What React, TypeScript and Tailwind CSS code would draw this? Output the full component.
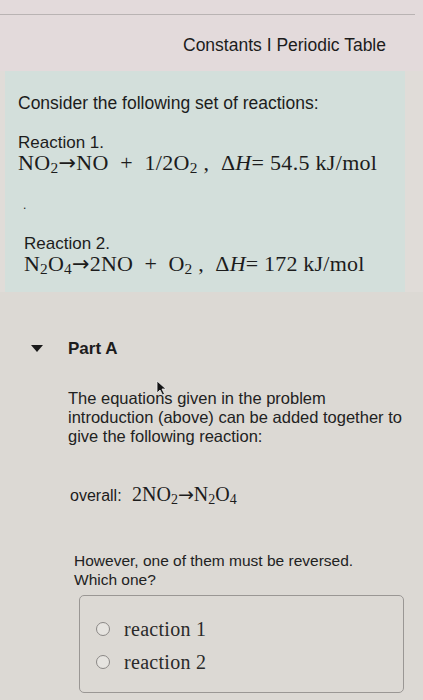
import React from 'react';

const sans = { fontFamily: '"Liberation Sans", Arial, sans-serif' };
const serif = { fontFamily: '"Liberation Serif", "Times New Roman", serif' };
const arrowFont = { fontFamily: '"DejaVu Sans", sans-serif' };

const Sub: React.FC<{ children: React.ReactNode }> = ({ children }) => (
  <sub className="text-[0.7em] relative top-[0.18em] align-baseline">{children}</sub>
);

const Arrow = () => (
  <span className="text-[0.95em]" style={arrowFont}>→</span>
);

const App: React.FC = () => {
  return (
    <div className="w-[423px] h-[700px] overflow-hidden bg-[#dcd9d4] text-[#1c1c1c]" style={sans}>
      <div className="bg-[#e3dadb] pt-[14px]">
        <div className="h-px bg-[#b9b3b3] mr-[8px]" />
        <div className="flex justify-end pr-[37px] pt-[20px] pb-[16px] text-[17.5px] leading-[20px]">
          Constants I Periodic Table
        </div>
      </div>

      <div className="bg-[#e0dcd8] pl-[5px] pr-[18px]">
        <div className="bg-[#d3dfdb] px-[13px] pt-[22px] pb-[17px]">
          <p className="text-[17.5px] leading-[20px]">Consider the following set of reactions:</p>

          <p className="mt-[21px] text-[17px] leading-[18px]">Reaction 1.</p>
          <p className="text-[22px] leading-[22px] whitespace-nowrap tracking-[0.3px]" style={serif}>
            NO<Sub>2</Sub>
            <Arrow />
            NO&nbsp; + &nbsp;1/2O<Sub>2</Sub>&nbsp;, &nbsp;Δ<i>H</i>= 54.5 kJ/mol
          </p>

          <p className="mt-[24px] ml-[5px] text-[12px] leading-[14px]">.</p>

          <p className="mt-[23px] ml-[6px] text-[17px] leading-[18px]">Reaction 2.</p>
          <p className="ml-[6px] text-[22px] leading-[22px] whitespace-nowrap tracking-[0.2px]" style={serif}>
            N<Sub>2</Sub>O<Sub>4</Sub>
            <Arrow />
            2NO&nbsp; + &nbsp;O<Sub>2</Sub>&nbsp;, &nbsp;Δ<i>H</i>= 172 kJ/mol
          </p>
        </div>
      </div>

      <div className="pt-[48px] pl-[31px] pr-[18px]">
        <div className="flex items-center h-[18px]">
          <svg width="12" height="8" viewBox="0 0 12 8" className="mr-[25px]">
            <path d="M0 0 L12 0 L6 7 Z" fill="#1a1a1a" />
          </svg>
          <span className="font-bold text-[17px] leading-[18px]">Part A</span>
        </div>

        <div className="ml-[37px] relative">
          <svg width="12" height="16" viewBox="0 0 12 16" className="absolute left-[88px] top-[22px]">
            <path d="M1 1 L1 13 L4 10 L6.5 15 L8.5 14 L6 9 L10 9 Z" fill="#151515" stroke="#f0f0f0" strokeWidth="0.8" />
          </svg>
          <p className="pt-[31px] w-[340px] text-[16.5px] leading-[19px] text-[#222]">
            The equations given in the problem introduction (above) can be added together to give the following reaction:
          </p>

          <p className="mt-[36px] ml-[2px] text-[16px] leading-[24px] whitespace-nowrap">
            overall:{' '}
            <span className="ml-[6px] text-[20px]" style={serif}>
              2NO<Sub>2</Sub>
              <Arrow />
              N<Sub>2</Sub>O<Sub>4</Sub>
            </span>
          </p>

          <p className="mt-[43px] ml-[6px] text-[15.5px] leading-[19px] text-[#222]">
            However, one of them must be reversed.
            <br />
            Which one?
          </p>

          <div className="mt-[6px] ml-[11px] mr-[1px] border border-[#9a9794] rounded-[5px] h-[98px] pt-[22px] pl-[16px]">
            {['reaction 1', 'reaction 2'].map((label, i) => (
              <label key={label} className={`flex items-center ${i > 0 ? 'mt-[11px]' : ''}`}>
                <span className="w-[14px] h-[14px] rounded-full border-[1.5px] border-[#8b8886] bg-[#e6e4e0] mr-[14px]" />
                <span className="text-[20px] leading-[22px] text-[#2a2a2a] tracking-[0.3px]" style={serif}>{label}</span>
              </label>
            ))}
          </div>
        </div>
      </div>
    </div>
  );
};

export default App;
